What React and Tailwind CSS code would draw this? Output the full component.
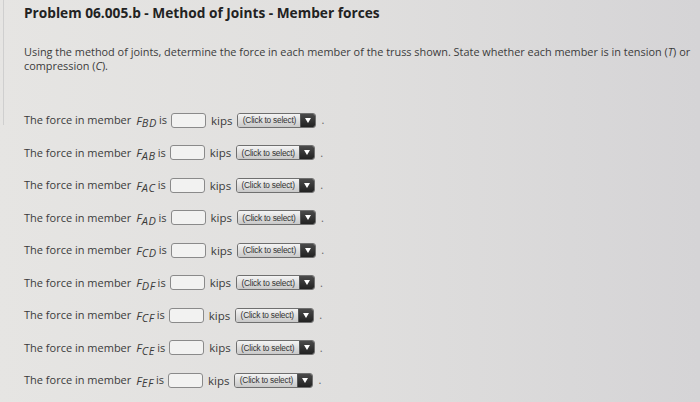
const members = ['BD', 'AB', 'AC', 'AD', 'CD', 'DF', 'CF', 'CE', 'EF']

const Row = ({ sub }) => (
  <div className="flex items-center h-[32.5px]">
    <span className="text-[11px] text-[#3b3b3b]">The force in member</span>
    <span className="ml-[5px] text-[11.5px] text-[#3b3b3b] italic">F</span>
    <span className="text-[11px] text-[#3b3b3b] italic relative top-[3px] tracking-[0.6px]">{sub}</span>
    <span className="ml-[2px] text-[11px] text-[#3b3b3b]">is</span>
    <div className="ml-[4px] w-[35px] h-[15px] bg-[#f2f2f1] border border-[#8a8a8a] rounded-[3px]" />
    <span className="ml-[5px] text-[11.5px] text-[#3b3b3b]">kips</span>
    <div className="ml-[5px] flex items-stretch h-[15px] w-[79px] rounded-[3px] border border-[#6f6f6f] overflow-hidden">
      <div className="flex-1 flex items-center justify-center bg-linear-to-b from-[#f4f4f4] to-[#c9c9c9] border-r border-[#555]">
        <span className="text-[8.3px] text-[#333] font-['Liberation_Sans',sans-serif] leading-none tracking-[-0.2px]">(Click to select)</span>
      </div>
      <div className="w-[14px] flex items-center justify-center bg-linear-to-b from-[#4a4a4a] to-[#222]">
        <svg width="6" height="5" viewBox="0 0 6 5">
          <path d="M0 0 H6 L3 5 Z" fill="#fff" />
        </svg>
      </div>
    </div>
    <span className="ml-[5px] text-[11px] text-[#666]">.</span>
  </div>
)

export default function App() {
  return (
    <div className="w-[700px] h-[402px] overflow-hidden bg-linear-to-r from-[#e6e5e3] via-[#e0dfde] to-[#d5d4d6] font-['Open_Sans',sans-serif] relative">
      <div className="absolute left-[3px] top-0 h-[125px] w-px bg-[#cfcfcf]" />
      <div className="pl-[24px] pt-[4px]">
        <h1 className="text-[13.7px] font-bold text-[#222] leading-[18px]">
          Problem 06.005.b - Method of Joints - Member forces
        </h1>
        <p className="mt-[23px] text-[10.9px] leading-[13.5px] text-[#3b3b3b] pr-[4px]">
          Using the method of joints, determine the force in each member of the truss shown. State whether each member is in tension (<i>T</i>) or compression (<i>C</i>).
        </p>
        <div className="mt-[32px] flex flex-col">
          {members.map((sub) => (
            <Row key={sub} sub={sub} />
          ))}
        </div>
      </div>
    </div>
  )
}
